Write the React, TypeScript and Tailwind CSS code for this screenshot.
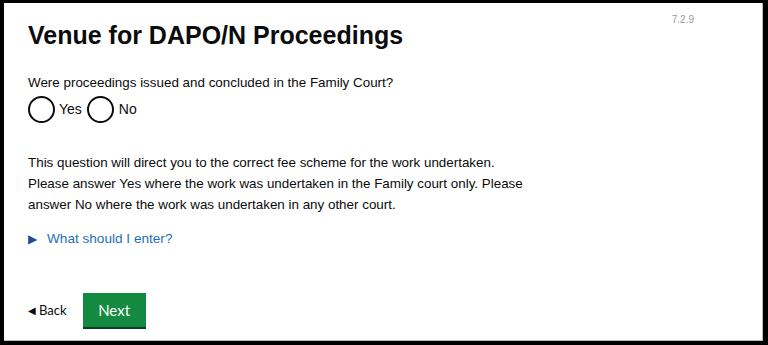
export default function App() {
  return (
    <div className="h-[345px] w-[768px] bg-black pl-1 pt-[3px] pr-[5px] pb-1" style={{ fontFamily: '"Liberation Sans", Arial, sans-serif' }}>
      <div className="relative h-full w-full bg-white border-r border-b border-[#bdbdbd] pl-6 pt-[16px]">
        <span className="absolute right-[68px] top-[9px] text-[10px] text-[#9a9a9a]">7.2.9</span>
        <h1 className="text-[25px] font-bold leading-[32px] text-[#0b0c0c]">Venue for DAPO/N Proceedings</h1>
        <p className="mt-[22px] text-[13.4px] leading-[20px] text-[#0b0c0c]">Were proceedings issued and concluded in the Family Court?</p>
        <div className="mt-[3px] flex items-center">
          <label className="flex items-center">
            <span className="h-[27px] w-[27px] rounded-full border-2 border-[#0b0c0c]" />
            <span className="ml-[4px] text-[14px] text-[#0b0c0c]">Yes</span>
          </label>
          <label className="ml-[5px] flex items-center">
            <span className="h-[27px] w-[27px] rounded-full border-2 border-[#0b0c0c]" />
            <span className="ml-[5px] text-[14px] text-[#0b0c0c]">No</span>
          </label>
        </div>
        <div className="mt-[29px] text-[13.4px] leading-[21px] text-[#0b0c0c]">
          <p>This question will direct you to the correct fee scheme for the work undertaken.</p>
          <p>Please answer Yes where the work was undertaken in the Family court only. Please</p>
          <p>answer No where the work was undertaken in any other court.</p>
        </div>
        <div className="mt-[14px] flex items-center text-[13.6px] text-[#1d70b8]">
          <span className="text-[12px] text-[#1d4f8f]">&#9654;</span>
          <span className="ml-[10px]">What should I enter?</span>
        </div>
        <div className="mt-[44px] flex items-center" style={{ fontFamily: 'Lato, sans-serif' }}>
          <span className="flex items-center text-[13px] text-[#0b0c0c]">
            <span className="text-[10px]">&#9664;</span>
            <span className="ml-[3px]">Back</span>
          </span>
          <button className="ml-[16px] h-[34px] w-[63px] bg-[#138a40] text-[15px] text-white shadow-[0_2px_0_#0b3d1f]">Next</button>
        </div>
      </div>
    </div>
  )
}
